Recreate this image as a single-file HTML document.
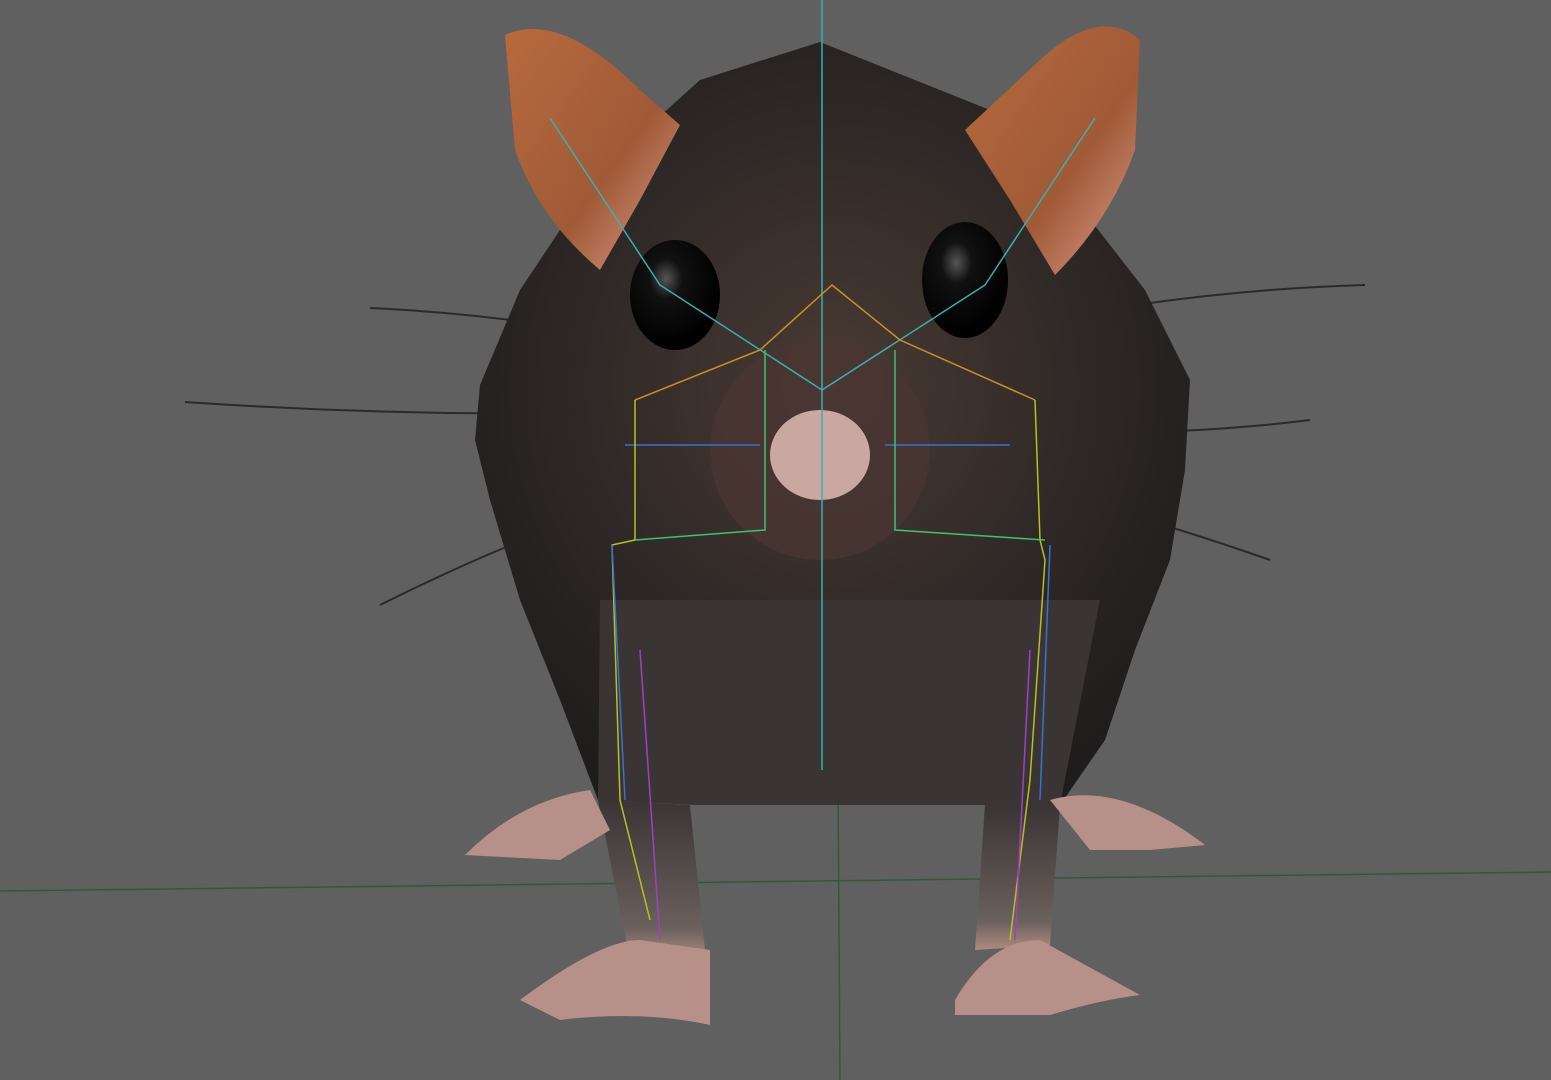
<!DOCTYPE html>
<html><head><meta charset="utf-8"><style>
html,body{margin:0;padding:0;background:#606060;width:1551px;height:1080px;overflow:hidden}
svg{display:block}
</style></head><body>
<svg width="1551" height="1080" viewBox="0 0 1551 1080" xmlns="http://www.w3.org/2000/svg">
<defs>
<radialGradient id="fur" cx="50%" cy="45%" r="60%">
<stop offset="0" stop-color="#4a3a34"/><stop offset="0.6" stop-color="#2e2826"/><stop offset="1" stop-color="#1e1c1c"/>
</radialGradient>
<linearGradient id="ear" x1="0" y1="0" x2="1" y2="1">
<stop offset="0" stop-color="#b86a3c"/><stop offset="0.6" stop-color="#a05a38"/><stop offset="1" stop-color="#e0a090"/>
</linearGradient>
<radialGradient id="eye" cx="40%" cy="35%" r="60%">
<stop offset="0" stop-color="#555"/><stop offset="0.3" stop-color="#111"/><stop offset="1" stop-color="#000"/>
</radialGradient>
<linearGradient id="legg" x1="0" y1="0" x2="0" y2="1">
<stop offset="0" stop-color="#3a3434"/><stop offset="0.8" stop-color="#6a605c"/><stop offset="1" stop-color="#b08a80"/>
</linearGradient>
</defs>
<rect width="1551" height="1080" fill="#606060"/>
<!-- ground lines -->
<line x1="0" y1="891" x2="1551" y2="872" stroke="#2f5a3a" stroke-width="1.5"/>
<line x1="838" y1="780" x2="840" y2="1080" stroke="#2f5a3a" stroke-width="1.5"/>
<!-- whiskers -->
<g stroke="#2a2a2a" stroke-width="2" fill="none">
<path d="M185 402 Q450 420 720 410"/>
<path d="M370 308 Q520 315 700 350"/>
<path d="M380 605 Q550 520 700 480"/>
<path d="M1365 285 Q1200 290 1050 320"/>
<path d="M1310 420 Q1150 440 940 430"/>
<path d="M1270 560 Q1100 500 940 470"/>
</g>
<!-- body -->
<polygon points="480,385 520,290 600,170 700,80 820,42 990,110 1075,200 1145,290 1190,380 1185,470 1170,560 1135,650 1105,740 1060,805 700,805 598,800 560,700 520,600 490,500 475,440" fill="url(#fur)"/>
<polygon points="600,600 1100,600 1060,805 700,805 598,800" fill="#3a3434"/>
<!-- ears -->
<path d="M505 35 Q560 10 640 90 L680 125 L640 200 L600 270 Q540 220 515 150 Z" fill="url(#ear)"/>
<path d="M1140 40 Q1100 5 1040 60 L965 130 L1010 200 L1055 275 Q1110 220 1135 150 Z" fill="url(#ear)"/>
<!-- eyes -->
<ellipse cx="675" cy="295" rx="45" ry="55" fill="url(#eye)"/>
<ellipse cx="965" cy="280" rx="43" ry="58" fill="url(#eye)"/>
<!-- muzzle -->
<ellipse cx="820" cy="450" rx="110" ry="110" fill="#4a3632" opacity="0.8"/>
<ellipse cx="820" cy="455" rx="50" ry="45" fill="#c8a8a0"/>
<!-- legs -->
<polygon points="598,800 690,805 705,950 630,960" fill="url(#legg)"/>
<polygon points="985,805 1060,805 1050,945 975,950" fill="url(#legg)"/>
<!-- feet -->
<path d="M520 1000 Q600 940 640 940 L710 950 L710 1025 Q640 1010 560 1020 Z" fill="#b8908a"/>
<path d="M955 1000 Q990 940 1040 940 L1140 995 Q1100 1000 1050 1015 L955 1015 Z" fill="#b8908a"/>
<path d="M465 855 Q520 800 590 790 L610 830 L560 860 Z" fill="#b8908a"/>
<path d="M1050 800 Q1120 780 1205 845 L1150 850 L1090 850 Z" fill="#b8908a"/>
<!-- skeleton -->
<g fill="none" stroke-width="1.5">
<line x1="822" y1="0" x2="822" y2="770" stroke="#3ab0b0"/>
<path d="M550 118 L660 285 L822 390 L985 285 L1095 118" stroke="#3ab0b0"/>
<path d="M635 400 L760 350 L832 285 L900 340 L1035 400" stroke="#c8902a"/>
<path d="M625 445 L760 445 M885 445 L1010 445" stroke="#3a70d0"/>
<path d="M635 400 L635 540 L612 545 L620 800 L650 920 M1035 400 L1040 540 L1045 560 L1030 780 L1010 940" stroke="#b8c020"/>
<path d="M765 350 L765 530 L635 540 M895 350 L895 530 L1045 540" stroke="#40c070"/>
<path d="M612 545 L625 800 M1050 545 L1040 800" stroke="#3a70d0"/>
<path d="M640 650 L660 940 M1030 650 L1015 940" stroke="#a040c0"/>
</g>
</svg>
</body></html>
